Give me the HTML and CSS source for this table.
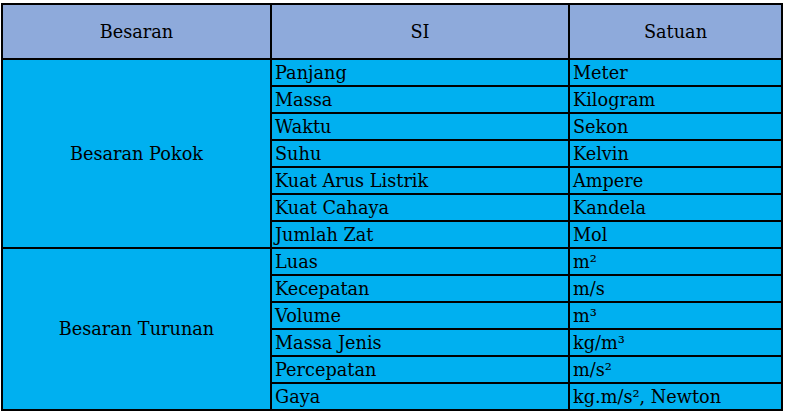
FILE: index.html
```html
<!DOCTYPE html>
<html>
<head>
<meta charset="utf-8">
<link rel="stylesheet" href="styles.css">
</head>
<body>
<table class="grid">
  <colgroup>
    <col class="c1"><col class="c2"><col class="c3">
  </colgroup>
  <thead>
    <tr class="head">
      <th>Besaran</th><th>SI</th><th>Satuan</th>
    </tr>
  </thead>
  <tbody>
    <tr><td class="group" rowspan="7">Besaran Pokok</td><td>Panjang</td><td>Meter</td></tr>
    <tr><td>Massa</td><td>Kilogram</td></tr>
    <tr><td>Waktu</td><td>Sekon</td></tr>
    <tr><td>Suhu</td><td>Kelvin</td></tr>
    <tr><td>Kuat Arus Listrik</td><td>Ampere</td></tr>
    <tr><td>Kuat Cahaya</td><td>Kandela</td></tr>
    <tr><td>Jumlah Zat</td><td>Mol</td></tr>
    <tr><td class="group" rowspan="6">Besaran Turunan</td><td>Luas</td><td>m²</td></tr>
    <tr><td>Kecepatan</td><td>m/s</td></tr>
    <tr><td>Volume</td><td>m³</td></tr>
    <tr><td>Massa Jenis</td><td>kg/m³</td></tr>
    <tr><td>Percepatan</td><td>m/s²</td></tr>
    <tr><td>Gaya</td><td>kg.m/s², Newton</td></tr>
  </tbody>
</table>
</body>
</html>
```
FILE: styles.css
```css
html, body {
  margin: 0;
  padding: 0;
  background: #ffffff;
}
body {
  padding: 3px 0 0 1px;
  font-family: "DejaVu Serif", "Liberation Serif", serif;
  color: #000;
}
.grid {
  border-collapse: collapse;
  table-layout: fixed;
  width: 782px;
  font-size: 17.7px;
}
.c1 { width: 269px; }
.c2 { width: 298px; }
.c3 { width: 213px; }
.grid th, .grid td {
  border: 2px solid #000;
  padding: 0 0 0 3px;
  line-height: 20px;
  white-space: nowrap;
  overflow: hidden;
}
.head th {
  background: #8eaadb;
  font-weight: normal;
  text-align: center;
  height: 53px;
  padding: 0;
}
.grid td {
  background: #00b0f0;
  height: 25px;
  vertical-align: middle;
}
.grid td.group {
  text-align: center;
  vertical-align: middle;
  padding: 0;
}
```
